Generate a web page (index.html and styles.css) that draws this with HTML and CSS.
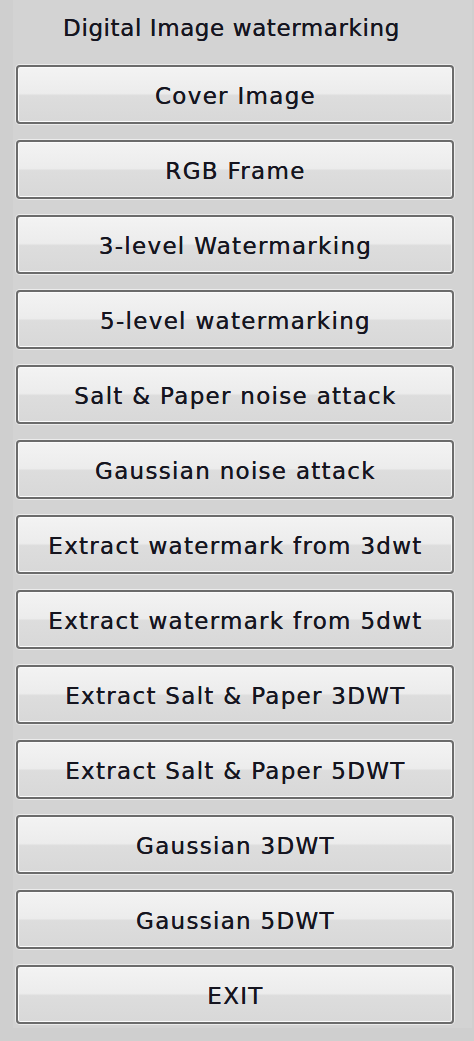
FILE: index.html
```html
<!DOCTYPE html>
<html>
<head>
<meta charset="utf-8">
<link rel="stylesheet" href="styles.css">
</head>
<body>
<div class="panel">
  <div class="title">Digital Image watermarking</div>
  <div class="buttons">
    <button class="btn">Cover Image</button>
    <button class="btn">RGB Frame</button>
    <button class="btn">3-level Watermarking</button>
    <button class="btn">5-level watermarking</button>
    <button class="btn">Salt &amp; Paper noise attack</button>
    <button class="btn">Gaussian noise attack</button>
    <button class="btn">Extract watermark from 3dwt</button>
    <button class="btn">Extract watermark from 5dwt</button>
    <button class="btn">Extract Salt &amp; Paper 3DWT</button>
    <button class="btn">Extract Salt &amp; Paper 5DWT</button>
    <button class="btn">Gaussian 3DWT</button>
    <button class="btn">Gaussian 5DWT</button>
    <button class="btn">EXIT</button>
  </div>
</div>
</body>
</html>
```
FILE: styles.css
```css
html, body {
  margin: 0;
  padding: 0;
  background: #cfcfcf;
}
body {
  width: 474px;
  height: 1041px;
  overflow: hidden;
  font-family: "DejaVu Sans", Verdana, sans-serif;
  color: #15151f;
}
.panel {
  margin: 0 2px 0 13px;
  background: #d3d3d3;
  padding: 0 5px 0 3px;
  height: 1028px;
  box-sizing: border-box;
}
.title {
  height: 65px;
  display: flex;
  align-items: center;
  justify-content: center;
  font-size: 23px;
  letter-spacing: 0.6px;
  padding-right: 20px;
  padding-bottom: 9px;
  box-sizing: border-box;
  text-shadow: 0 0 0.4px #15151f;
}
.buttons {
  display: flex;
  flex-direction: column;
  gap: 16px;
}
.btn {
  display: block;
  width: 438px;
  height: 59px;
  margin: 0;
  padding: 2px 0 0 1px;
  border: 2px solid #6b6b6b;
  border-radius: 4px;
  background: linear-gradient(to bottom, #f3f3f3 0%, #ececec 48%, #dddddd 52%, #d8d8d8 100%);
  box-shadow: inset 0 0 0 1px #fbfbfb, 0 0 0 1px #ececec;
  font-family: "DejaVu Sans", Verdana, sans-serif;
  font-size: 23px;
  letter-spacing: 1.3px;
  color: #15151f;
  text-align: center;
  text-shadow: 0 0 0.4px #15151f;
}
```
